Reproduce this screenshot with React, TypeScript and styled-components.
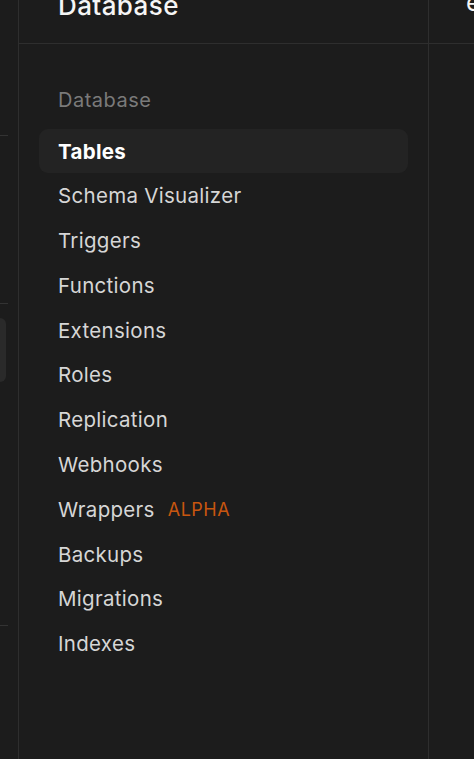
import React from "react";
import styled, { createGlobalStyle } from "styled-components";

const Global = createGlobalStyle`
  html, body { margin: 0; padding: 0; background: #1c1c1c; }
  body { font-family: Inter, "Noto Sans", sans-serif; overflow: hidden; }
`;

const Page = styled.div`
  display: flex;
  width: 474px;
  height: 759px;
  background: #1c1c1c;
  overflow: hidden;
`;

const Rail = styled.div`
  width: 18px;
  flex-shrink: 0;
  border-right: 1px solid #2e2e2e;
  position: relative;
`;

const RailLine = styled.div<{ $top: number; $w: number }>`
  position: absolute;
  left: 0;
  top: ${(p) => p.$top}px;
  width: ${(p) => p.$w}px;
  height: 1px;
  background: #333;
`;

const RailButton = styled.div`
  position: absolute;
  left: -6px;
  top: 318px;
  width: 12px;
  height: 64px;
  border-radius: 6px;
  background: #2a2a2a;
`;

const Sidebar = styled.div`
  width: 409px;
  flex-shrink: 0;
  border-right: 1px solid #2e2e2e;
  display: flex;
  flex-direction: column;
`;

const Header = styled.div`
  height: 44px;
  border-bottom: 1px solid #2e2e2e;
  display: flex;
  align-items: flex-end;
  padding-left: 39px;
  box-sizing: border-box;
`;

const Title = styled.div`
  font-size: 26px;
  letter-spacing: 0.4px;
  color: #f5f5f5;
  font-weight: 500;
  line-height: 1;
  margin-bottom: 24px;
`;

const Nav = styled.div`
  display: flex;
  flex-direction: column;
  padding: 41px 20px 0 20px;
`;

const Section = styled.div`
  font-size: 20px;
  letter-spacing: 0.5px;
  color: #7a7a7a;
  padding-left: 19px;
  height: 30px;
  line-height: 30px;
  margin-bottom: 14px;
`;

const Item = styled.div<{ $active?: boolean }>`
  height: 44px;
  margin-bottom: 0.8px;
  display: flex;
  align-items: center;
  gap: 13px;
  padding-left: 19px;
  border-radius: 9px;
  font-size: 20.5px;
  letter-spacing: 0.3px;
  color: ${(p) => (p.$active ? "#ffffff" : "#d6d6d6")};
  font-weight: ${(p) => (p.$active ? 700 : 400)};
  background: ${(p) => (p.$active ? "#232323" : "transparent")};
`;

const Badge = styled.span`
  font-size: 18px;
  color: #c8560f;
  letter-spacing: 0.5px;
`;

const Main = styled.div`
  flex: 1;
  display: flex;
  flex-direction: column;
`;

const MainHeader = styled.div`
  border-bottom: 1px solid #2e2e2e;
  box-sizing: border-box;
  padding-left: 37px;
  color: #f5f5f5;
  font-size: 25px;
  line-height: 1;
  margin-top: -10px;
  height: 54px;
`;

const items = [
  "Tables",
  "Schema Visualizer",
  "Triggers",
  "Functions",
  "Extensions",
  "Roles",
  "Replication",
  "Webhooks",
  "Wrappers",
  "Backups",
  "Migrations",
  "Indexes",
];

export default function App() {
  return (
    <Page>
      <Global />
      <Rail>
        <RailLine $top={135} $w={8} />
        <RailLine $top={303} $w={8} />
        <RailLine $top={625} $w={8} />
        <RailButton />
      </Rail>
      <Sidebar>
        <Header>
          <Title>Database</Title>
        </Header>
        <Nav>
          <Section>Database</Section>
          {items.map((it, i) => (
            <Item key={it} $active={i === 0}>
              {it}
              {it === "Wrappers" && <Badge>ALPHA</Badge>}
            </Item>
          ))}
        </Nav>
      </Sidebar>
      <Main>
        <MainHeader>e</MainHeader>
      </Main>
    </Page>
  );
}
